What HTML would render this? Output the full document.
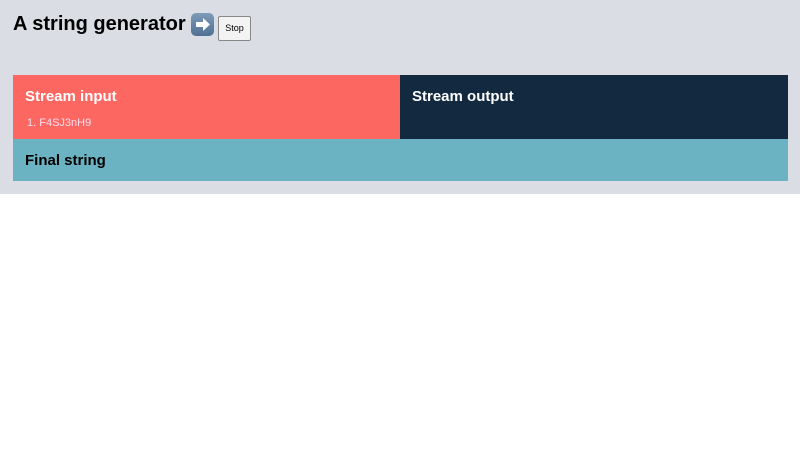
<!DOCTYPE html>
<html><head><style>
body{margin:0;background:#fff;font-family:"Liberation Sans",sans-serif;}
.top{background:#dadde4;height:194px;position:relative;}
h1{position:absolute;left:13px;top:13px;margin:0;font-size:20px;font-weight:bold;color:#000;}
.emoji{position:absolute;left:191px;top:13px;width:23px;height:23px;border-radius:5px;background:linear-gradient(#7f9bb8,#4f6f93);}
.btn{position:absolute;left:218px;top:16px;width:31px;height:23px;border:1px solid #888;background:#f3f3f3;font-size:9px;line-height:23px;text-align:center;border-radius:2px;}
.in{position:absolute;left:13px;top:75px;width:387px;height:64px;background:#fd6762;color:#fff;}
.out{position:absolute;left:400px;top:75px;width:388px;height:64px;background:#13293f;color:#fff;}
.fin{position:absolute;left:13px;top:139px;width:775px;height:42px;background:#6bb3c3;color:#000;}
.t{position:absolute;left:12px;top:13px;font-size:15px;font-weight:bold;}
.li{position:absolute;left:14px;top:42px;font-size:11px;color:#fde;}
</style></head><body>
<div class="top">
<h1>A string generator</h1>
<div class="emoji"><svg width="23" height="23"><path d="M5 9h7V5l7 6.5-7 6.5v-4H5z" fill="#fff"/></svg></div>
<div class="btn">Stop</div>
<div class="in"><div class="t">Stream input</div><div class="li">1. F4SJ3nH9</div></div>
<div class="out"><div class="t">Stream output</div></div>
<div class="fin"><div class="t">Final string</div></div>
</div>
</body></html>
